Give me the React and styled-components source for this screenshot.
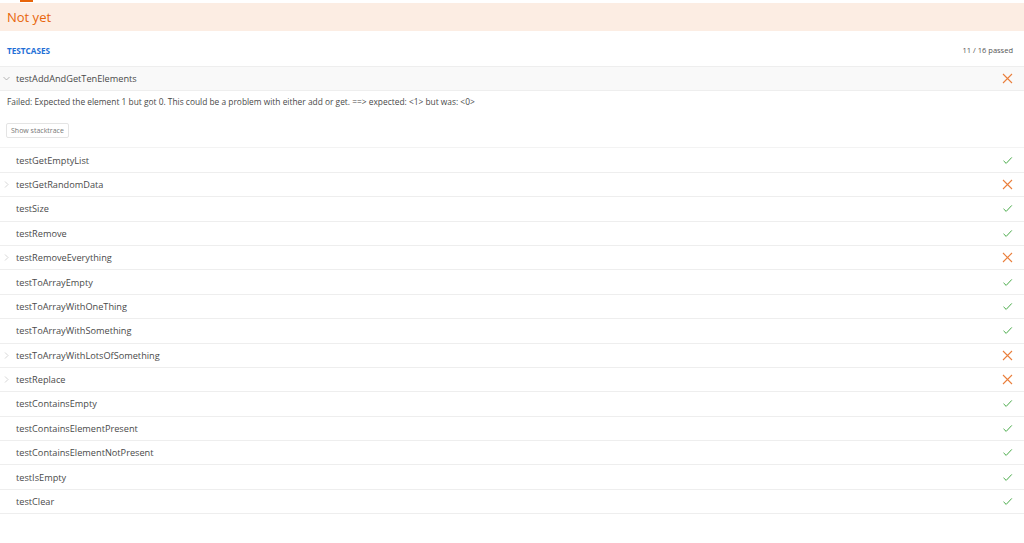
import React from "react";
import styled, { createGlobalStyle } from "styled-components";

const GlobalStyle = createGlobalStyle`
  html, body {
    margin: 0;
    padding: 0;
    background: #fff;
    font-family: "Open Sans", "Noto Sans", sans-serif;
    color: #333;
  }
`;

const tests = [
  { name: "testAddAndGetTenElements", passed: false, open: true },
  { name: "testGetEmptyList", passed: true },
  { name: "testGetRandomData", passed: false },
  { name: "testSize", passed: true },
  { name: "testRemove", passed: true },
  { name: "testRemoveEverything", passed: false },
  { name: "testToArrayEmpty", passed: true },
  { name: "testToArrayWithOneThing", passed: true },
  { name: "testToArrayWithSomething", passed: true },
  { name: "testToArrayWithLotsOfSomething", passed: false },
  { name: "testReplace", passed: false },
  { name: "testContainsEmpty", passed: true },
  { name: "testContainsElementPresent", passed: true },
  { name: "testContainsElementNotPresent", passed: true },
  { name: "testIsEmpty", passed: true },
  { name: "testClear", passed: true },
];

const CheckIcon = () => (
  <svg width="11" height="9" viewBox="0 0 11 9">
    <path d="M1.5 4.8 L4.2 7.4 L9.8 1.4" fill="none" stroke="#33a033" strokeWidth="0.9" />
  </svg>
);

const CrossIcon = () => (
  <svg width="11" height="11" viewBox="0 0 11 11">
    <path d="M1 1 L10 10 M10 1 L1 10" fill="none" stroke="#ea7f3c" strokeWidth="1.1" />
  </svg>
);

const Chevron = ({ open }) => (
  <svg width="7" height="7" viewBox="0 0 7 7">
    {open ? (
      <path d="M0.5 2 L3.5 5 L6.5 2" fill="none" stroke="#999" strokeWidth="0.7" />
    ) : (
      <path d="M2 0.5 L5 3.5 L2 6.5" fill="none" stroke="#c4c4c4" strokeWidth="0.7" />
    )}
  </svg>
);

export default function App() {
  const passed = tests.filter((t) => t.passed).length;
  return (
    <Page>
      <GlobalStyle />
      <TabMark />
      <Banner>Not yet</Banner>
      <ListHeader>
        <Title>TESTCASES</Title>
        <Summary>
          {passed} / {tests.length} passed
        </Summary>
      </ListHeader>
      <List>
        {tests.map((t) => (
          <React.Fragment key={t.name}>
            <Row $open={t.open}>
              <ChevronSlot>{!t.passed && <Chevron open={t.open} />}</ChevronSlot>
              <Name>{t.name}</Name>
              <Status>{t.passed ? <CheckIcon /> : <CrossIcon />}</Status>
            </Row>
            {t.open && (
              <Details>
                <Message>
                  Failed: Expected the element 1 but got 0. This could be a problem with either add or get.
                  {" ==> expected: <1> but was: <0>"}
                </Message>
                <StackButton>Show stacktrace</StackButton>
              </Details>
            )}
          </React.Fragment>
        ))}
      </List>
    </Page>
  );
}

const Page = styled.div`
  width: 1024px;
  display: flex;
  flex-direction: column;
`;

const TabMark = styled.div`
  width: 13px;
  height: 2px;
  margin-left: 20px;
  margin-bottom: 1px;
  background: #e8650a;
`;

const Banner = styled.div`
  height: 28px;
  display: flex;
  align-items: center;
  padding-left: 7px;
  background: #fcede3;
  color: #e8650a;
  font-size: 13px;
  line-height: 1;
`;

const ListHeader = styled.div`
  height: 36px;
  box-sizing: border-box;
  padding: 3px 11px 0 7px;
  display: flex;
  align-items: center;
  justify-content: space-between;
  border-bottom: 1px solid #eee;
`;

const Title = styled.span`
  color: #1f6fd6;
  font-size: 8.2px;
  font-weight: 700;
`;

const Summary = styled.span`
  color: #555;
  font-size: 7.5px;
`;

const List = styled.div`
  display: flex;
  flex-direction: column;
`;

const Row = styled.div`
  height: 23.4px;
  display: flex;
  align-items: center;
  padding: 0 11px 0 3px;
  background: ${({ $open }) => ($open ? "#f9f9f9" : "#fff")};
  border-bottom: 1px solid #eee;
`;

const ChevronSlot = styled.span`
  width: 13px;
  display: flex;
  align-items: center;
`;

const Name = styled.span`
  flex: 1;
  font-size: 9.2px;
  color: #4a4a4a;
`;

const Status = styled.span`
  display: flex;
  align-items: center;
`;

const Details = styled.div`
  height: 51px;
  display: flex;
  flex-direction: column;
  align-items: flex-start;
  padding: 5px 6px 0 7px;
  border-bottom: 1px solid #f3f3f3;
`;

const Message = styled.div`
  font-size: 8.4px;
  color: #4a4a4a;
  line-height: 12px;
`;

const StackButton = styled.button`
  margin-top: 15px;
  margin-left: -1px;
  height: 15px;
  padding: 0 4px;
  border: 1px solid #e4e4e4;
  border-radius: 2px;
  background: #fff;
  color: #777;
  font-family: inherit;
  font-size: 7px;
`;
